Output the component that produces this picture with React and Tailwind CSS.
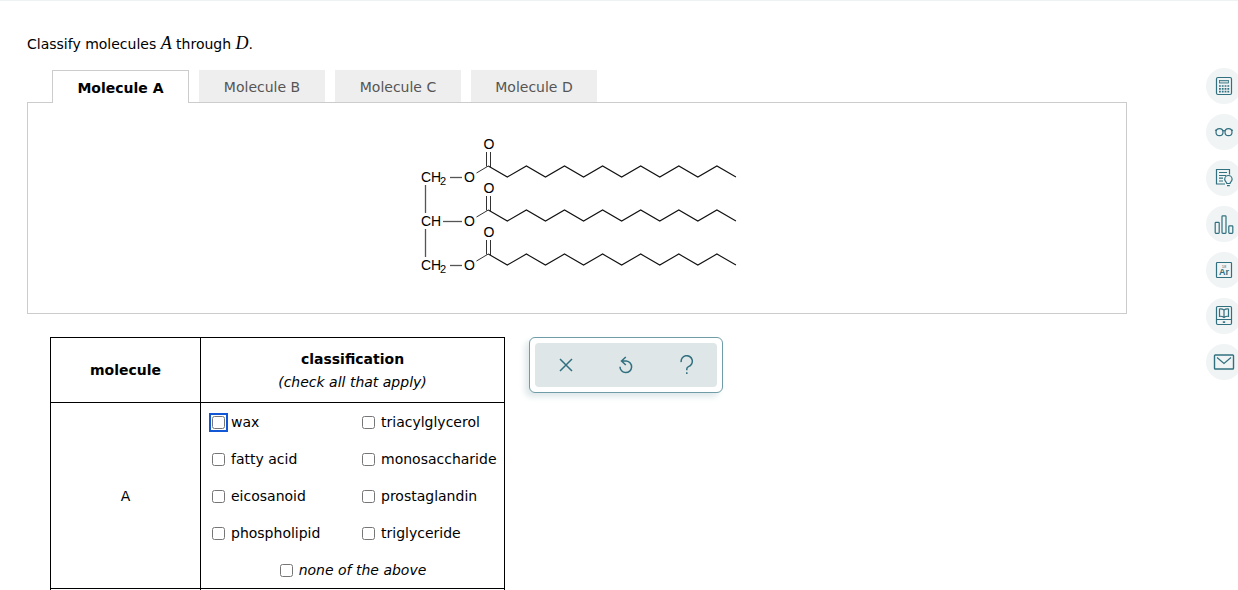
import React, { useState } from 'react';

const TABS = ['Molecule A', 'Molecule B', 'Molecule C', 'Molecule D'];

const OPTIONS = [
    'wax', 'triacylglycerol',
    'fatty acid', 'monosaccharide',
    'eicosanoid', 'prostaglandin',
    'phospholipid', 'triglyceride',
];

// ─── MOLECULE DRAWING ────────────────────────────────────────────────────────
const CHAIN = Array.from({ length: 14 }, (_, i) => `${488.3 + i * 19.05},${i % 2 ? 177 : 166}`).join(' ');

const Arm = ({ y, sub }) => (
    <g transform={`translate(0 ${y})`}>
        <text x="421" y="182">CH</text>
        {sub && <text x="440" y="185" fontSize="11">2</text>}
        <path d={sub ? 'M450 177.5H462' : 'M443 177.5H462'} stroke="#555" strokeWidth="1.3" />
        <text x="469.5" y="182" textAnchor="middle">O</text>
        <text x="489" y="149" textAnchor="middle">O</text>
        <path d="M476.5 173L488.3 166M486.5 152V166.5M490.5 152V167" stroke="#333" fill="none" />
        <polyline points={CHAIN} stroke="#111" strokeWidth="1.1" fill="none" />
    </g>
);

const Triglyceride = () => (
    <svg width="320" height="140" viewBox="420 136 320 140" fontSize="14" className="font-['Liberation_Sans',sans-serif]" role="img" aria-label="Molecule A">
        <Arm y={0} sub />
        <Arm y={44} />
        <Arm y={88} sub />
        <path d="M425.5 185V213M425.5 229V257" stroke="#555" strokeWidth="1.3" />
    </svg>
);

// ─── SIDE RAIL ───────────────────────────────────────────────────────────────
const RAIL = [
    {
        name: 'Calculator',
        art: (
            <>
                <rect x="10.5" y="9.5" width="15" height="17" rx="1.5" />
                <rect x="13.5" y="12.5" width="9" height="2.5" fill="#c5d6d9" strokeWidth="0.8" />
                <path d="M13 18H23.5M13 20.8H23.5M13 23.6H23.5" strokeWidth="1.7" strokeDasharray="1.8 1" />
            </>
        ),
    },
    {
        name: 'Glasses',
        art: (
            <>
                <circle cx="13.5" cy="18.2" r="3.5" />
                <circle cx="22.5" cy="18.2" r="3.5" />
                <path d="M16.8 17.2Q18 16 19.2 17.2M10.3 16.5L9 16M25.7 16.5L27 16" />
            </>
        ),
    },
    {
        name: 'Hints',
        art: (
            <>
                <path d="M19 24H10.5V9.5H23.5V14.5" />
                <path d="M13 12.5H21M13 15.5H20M13 18.2H17M13 21H17" />
                <path d="M20.8 23.5C20.8 22 18.7 21.5 18.7 19.2A3.7 3.7 0 0 1 26.1 19.2C26.1 21.5 24 22 24 23.5ZM21 25.7H23.8" />
            </>
        ),
    },
    {
        name: 'Data',
        art: (
            <>
                <rect x="9.2" y="16.3" width="4" height="11" rx="0.8" />
                <rect x="16" y="9.8" width="4" height="17.5" rx="0.8" />
                <rect x="22.8" y="19.8" width="4" height="7.5" rx="0.8" />
            </>
        ),
    },
    {
        name: 'Periodic table',
        art: (
            <>
                <rect x="10.5" y="10.5" width="15" height="15" rx="0.8" />
                <g fill="#31707f" stroke="none" textAnchor="middle">
                    <text x="18" y="15.5" fontSize="4">18</text>
                    <text x="18" y="23" fontSize="9" fontWeight="bold">Ar</text>
                </g>
            </>
        ),
    },
    {
        name: 'Textbook',
        art: (
            <>
                <rect x="10.5" y="8.5" width="15" height="18" rx="1.2" />
                <path d="M10.5 21.5H25.5M18 12V19.5M18 12Q16 10.6 13.5 11V18.3Q16 18 18 19.5Q20 18 22.5 18.3V11Q20 10.6 18 12Z" />
                <path d="M16.8 24.1H19.2" strokeWidth="1.6" />
            </>
        ),
    },
    {
        name: 'Messages',
        art: (
            <>
                <rect x="8.5" y="11" width="19" height="14" rx="0.8" strokeWidth="1.4" />
                <path d="M11 13.5L18 19.5L25 13.5" />
            </>
        ),
    },
];

const SideRail = () => (
    <nav className="w-8 shrink-0 flex flex-col gap-2.5 pt-[67px]">
        {RAIL.map(item => (
            <button key={item.name} aria-label={item.name} className="w-9 h-9 shrink-0 rounded-full bg-[#f0f4f5]">
                <svg width="36" height="36" viewBox="0 0 36 36" fill="none" stroke="#31707f" strokeWidth="1.2" className="font-['Liberation_Sans',sans-serif]">
                    {item.art}
                </svg>
            </button>
        ))}
    </nav>
);

// ─── ANSWER TOOLBAR ──────────────────────────────────────────────────────────
const TOOLS = [
    { name: 'Clear', art: <path d="M5 4L17 16M17 4L5 16" /> },
    { name: 'Undo', art: <path d="M9.8 2L5.5 6L9.8 10M5.5 6H10.3A5.8 5.8 0 1 1 4 11.7" /> },
    { name: 'Help', art: <path d="M4.2 7.2A5.6 5.6 0 1 1 11.5 11.6Q9.8 12.3 9.8 14V15.2M9.8 17.2V19" /> },
];

const Toolbar = () => (
    <div className="w-[194px] h-14 p-[5px] rounded-md border border-[#6f9ca6] bg-white shadow-[-4px_4px_6px_#dfe8ea]">
        <div className="h-full grid grid-cols-3 rounded-sm bg-[#dfe6e7]">
            {TOOLS.map(tool => (
                <button key={tool.name} aria-label={tool.name} className="flex items-center justify-center">
                    <svg width="20" height="20" viewBox="0 0 20 20" fill="none" stroke="#31707f" strokeWidth="1.5">
                        {tool.art}
                    </svg>
                </button>
            ))}
        </div>
    </div>
);

const Option = ({ label, checked, onChange, className = '' }) => (
    <label className={`flex items-center gap-1.5 ${className}`}>
        <input
            type="checkbox"
            checked={checked}
            onChange={onChange}
            className={`w-[13px] h-[13px] mt-px shrink-0 ${label === 'wax' ? 'rounded-xs outline-2 outline-offset-1 outline-[#1258d6]' : ''}`}
        />
        {label}
    </label>
);

const App = () => {
    const [active, setActive] = useState('Molecule A');
    const [checked, setChecked] = useState({});

    const toggle = (label) => setChecked(prev => ({ ...prev, [label]: !prev[label] }));

    return (
        <div className="h-screen overflow-hidden flex border-t border-[#eef2f3] bg-white text-black text-sm font-['DejaVu_Sans',sans-serif]">
            <main className="flex-1 min-w-0 pl-[27px] pr-[79px] pt-[30px]">
                <p className="h-6 leading-6">
                    Classify molecules <i className="font-['Liberation_Serif',serif] text-lg leading-6">A</i> through <i className="font-['Liberation_Serif',serif] text-lg leading-6">D</i>.
                </p>

                <div role="tablist" className="flex gap-2.5 pl-[25px] mt-[15px]">
                    {TABS.map(tab => (
                        <button
                            key={tab}
                            role="tab"
                            aria-selected={tab === active}
                            onClick={() => setActive(tab)}
                            className={tab === active
                                ? 'relative h-[33px] -mb-px w-[137px] pt-0.5 bg-white border border-b-0 border-[#ccc] font-bold'
                                : 'h-8 w-[126px] pt-0.5 bg-[#eee] text-[#555]'}
                        >
                            {tab}
                        </button>
                    ))}
                </div>
                <section className="border border-[#ccc] flex justify-center pt-[33px] pb-[37px] pl-1.5">
                    <Triglyceride />
                </section>

                <div className="flex items-start gap-6 pl-[23px] mt-[23px]">
                    <table className="w-[455px] table-fixed border-collapse text-center">
                        <thead>
                            <tr className="h-[65px]">
                                <th className="w-[150px] border border-black">molecule</th>
                                <th className="border border-black leading-[23px] pt-0.5">
                                    classification
                                    <i className="block font-normal">(check all that apply)</i>
                                </th>
                            </tr>
                        </thead>
                        <tbody>
                            <tr>
                                <td className="border border-black">A</td>
                                <td className="border border-black pl-[11px]">
                                    <div className="grid grid-cols-[150px_1fr]">
                                        {OPTIONS.map(label => (
                                            <Option key={label} label={label} checked={!!checked[label]} onChange={() => toggle(label)} className="h-[37px]" />
                                        ))}
                                    </div>
                                    <Option
                                        label={<i>none of the above</i>}
                                        checked={!!checked.none}
                                        onChange={() => toggle('none')}
                                        className="h-[37px] justify-center pr-2.5"
                                    />
                                </td>
                            </tr>
                            <tr className="h-40">
                                <td className="border border-black" />
                                <td className="border border-black" />
                            </tr>
                        </tbody>
                    </table>
                    <Toolbar />
                </div>
            </main>
            <SideRail />
        </div>
    );
};

export default App;
